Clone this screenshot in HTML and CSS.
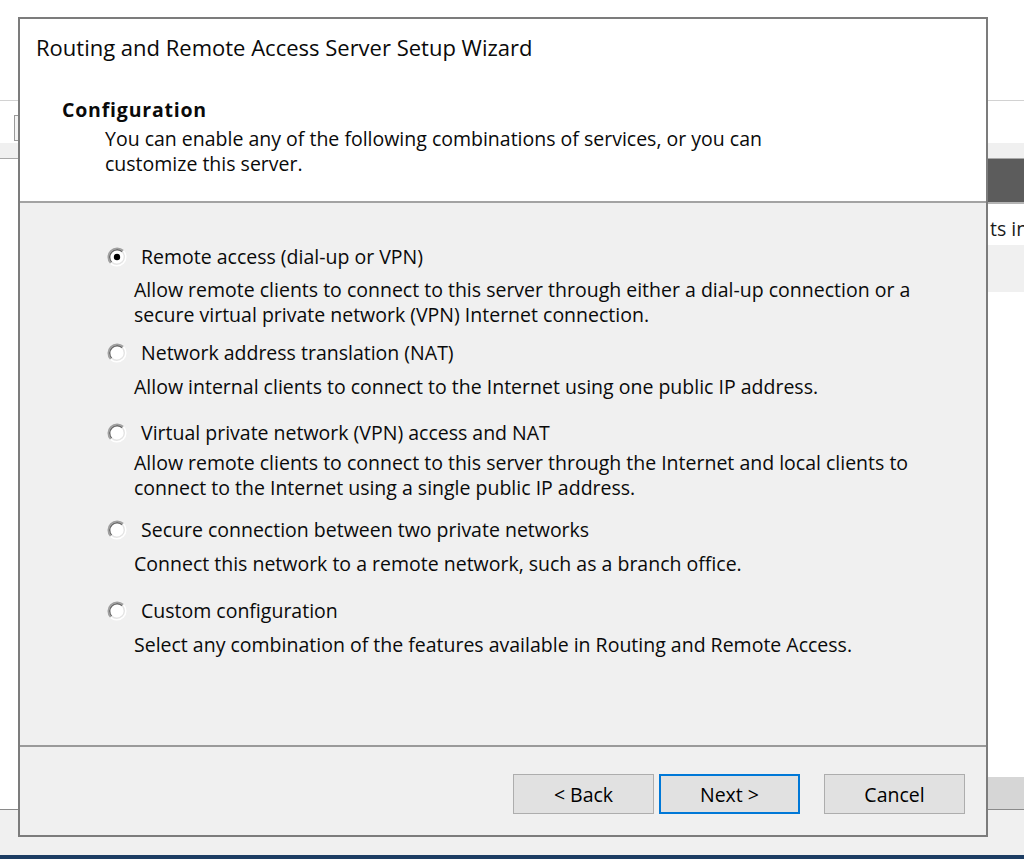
FILE: index.html
```html
<!DOCTYPE html>
<html>
<head>
<meta charset="utf-8">
<link rel="stylesheet" href="styles.css">
</head>
<body>
<div class="screen">
  <div class="app">
    <div class="app-top"></div>
    <div class="app-toolbar"><span class="tool-btn"></span></div>
    <div class="app-strip"></div>
    <div class="app-panes">
      <div class="pane-left"></div>
      <div class="pane-right">
        <div class="pane-head"></div>
        <div class="pane-row"><span class="pane-text">ts in</span></div>
        <div class="pane-band"></div>
        <div class="pane-fill"></div>
        <div class="pane-scroll"></div>
      </div>
    </div>
    <div class="app-status"></div>
    <div class="taskbar"></div>
  </div>

  <div class="dialog">
    <div class="dlg-header">
      <div class="dlg-title">Routing and Remote Access Server Setup Wizard</div>
      <div class="dlg-heading">Configuration</div>
      <div class="dlg-sub">You can enable any of the following combinations of services, or you can<br>customize this server.</div>
    </div>
    <div class="dlg-body">
      <div class="opt opt-1">
        <div class="opt-row">
          <svg class="radio" viewBox="0 0 20 20" width="20" height="20"><circle cx="10" cy="10" r="9" fill="#fff"/><path d="M3.64 16.36 A9 9 0 0 1 16.36 3.64" fill="none" stroke="#a0a0a0" stroke-width="1.5"/><path d="M4.7 15.3 A7.5 7.5 0 0 1 15.3 4.7" fill="none" stroke="#6a6a6a" stroke-width="1.4"/><path d="M16.36 3.64 A9 9 0 0 1 3.64 16.36" fill="none" stroke="#ffffff" stroke-width="1.5"/><path d="M15.3 4.7 A7.5 7.5 0 0 1 4.7 15.3" fill="none" stroke="#e4e4e4" stroke-width="1.4"/><circle cx="10" cy="10" r="3.2" fill="#000"/></svg>
          <span class="opt-label">Remote access (dial-up or VPN)</span>
        </div>
        <div class="opt-desc">Allow remote clients to connect to this server through either a dial-up connection or a<br>secure virtual private network (VPN) Internet connection.</div>
      </div>
      <div class="opt opt-2">
        <div class="opt-row">
          <svg class="radio" viewBox="0 0 20 20" width="20" height="20"><circle cx="10" cy="10" r="9" fill="#fff"/><path d="M3.64 16.36 A9 9 0 0 1 16.36 3.64" fill="none" stroke="#a0a0a0" stroke-width="1.5"/><path d="M4.7 15.3 A7.5 7.5 0 0 1 15.3 4.7" fill="none" stroke="#6a6a6a" stroke-width="1.4"/><path d="M16.36 3.64 A9 9 0 0 1 3.64 16.36" fill="none" stroke="#ffffff" stroke-width="1.5"/><path d="M15.3 4.7 A7.5 7.5 0 0 1 4.7 15.3" fill="none" stroke="#e4e4e4" stroke-width="1.4"/></svg>
          <span class="opt-label">Network address translation (NAT)</span>
        </div>
        <div class="opt-desc">Allow internal clients to connect to the Internet using one public IP address.</div>
      </div>
      <div class="opt opt-3">
        <div class="opt-row">
          <svg class="radio" viewBox="0 0 20 20" width="20" height="20"><circle cx="10" cy="10" r="9" fill="#fff"/><path d="M3.64 16.36 A9 9 0 0 1 16.36 3.64" fill="none" stroke="#a0a0a0" stroke-width="1.5"/><path d="M4.7 15.3 A7.5 7.5 0 0 1 15.3 4.7" fill="none" stroke="#6a6a6a" stroke-width="1.4"/><path d="M16.36 3.64 A9 9 0 0 1 3.64 16.36" fill="none" stroke="#ffffff" stroke-width="1.5"/><path d="M15.3 4.7 A7.5 7.5 0 0 1 4.7 15.3" fill="none" stroke="#e4e4e4" stroke-width="1.4"/></svg>
          <span class="opt-label">Virtual private network (VPN) access and NAT</span>
        </div>
        <div class="opt-desc">Allow remote clients to connect to this server through the Internet and local clients to<br>connect to the Internet using a single public IP address.</div>
      </div>
      <div class="opt opt-4">
        <div class="opt-row">
          <svg class="radio" viewBox="0 0 20 20" width="20" height="20"><circle cx="10" cy="10" r="9" fill="#fff"/><path d="M3.64 16.36 A9 9 0 0 1 16.36 3.64" fill="none" stroke="#a0a0a0" stroke-width="1.5"/><path d="M4.7 15.3 A7.5 7.5 0 0 1 15.3 4.7" fill="none" stroke="#6a6a6a" stroke-width="1.4"/><path d="M16.36 3.64 A9 9 0 0 1 3.64 16.36" fill="none" stroke="#ffffff" stroke-width="1.5"/><path d="M15.3 4.7 A7.5 7.5 0 0 1 4.7 15.3" fill="none" stroke="#e4e4e4" stroke-width="1.4"/></svg>
          <span class="opt-label">Secure connection between two private networks</span>
        </div>
        <div class="opt-desc">Connect this network to a remote network, such as a branch office.</div>
      </div>
      <div class="opt opt-5">
        <div class="opt-row">
          <svg class="radio" viewBox="0 0 20 20" width="20" height="20"><circle cx="10" cy="10" r="9" fill="#fff"/><path d="M3.64 16.36 A9 9 0 0 1 16.36 3.64" fill="none" stroke="#a0a0a0" stroke-width="1.5"/><path d="M4.7 15.3 A7.5 7.5 0 0 1 15.3 4.7" fill="none" stroke="#6a6a6a" stroke-width="1.4"/><path d="M16.36 3.64 A9 9 0 0 1 3.64 16.36" fill="none" stroke="#ffffff" stroke-width="1.5"/><path d="M15.3 4.7 A7.5 7.5 0 0 1 4.7 15.3" fill="none" stroke="#e4e4e4" stroke-width="1.4"/></svg>
          <span class="opt-label">Custom configuration</span>
        </div>
        <div class="opt-desc">Select any combination of the features available in Routing and Remote Access.</div>
      </div>
    </div>
    <div class="dlg-footer">
      <button class="btn">&lt; Back</button>
      <button class="btn btn-default">Next &gt;</button>
      <button class="btn btn-cancel">Cancel</button>
    </div>
  </div>
</div>
</body>
</html>
```

FILE: styles.css
```css
html, body {
  margin: 0;
  padding: 0;
}
body {
  width: 1024px;
  height: 859px;
  overflow: hidden;
  background: #ffffff;
  font-family: "Open Sans", "Noto Sans", "DejaVu Sans", sans-serif;
  color: #000;
}
.screen {
  position: relative;
  width: 1024px;
  height: 859px;
  overflow: hidden;
}

/* background application */
.app {
  display: flex;
  flex-direction: column;
  width: 1024px;
  height: 859px;
}
.app-top {
  height: 100px;
  border-bottom: 1px solid #d2d2d2;
  background: #fff;
}
.app-toolbar {
  height: 42px;
  background: #fff;
  display: flex;
  align-items: flex-start;
}
.tool-btn {
  margin: 14px 0 0 14px;
  width: 22px;
  height: 24px;
  border: 1px solid #9a9a9a;
  background: #f4f4f4;
}
.app-strip {
  height: 15px;
  background: #f0f0f0;
  border-bottom: 1px solid #a8a8a8;
}
.app-panes {
  flex: 1;
  display: flex;
}
.pane-left {
  width: 600px;
  background: #fff;
}
.pane-right {
  flex: 1;
  display: flex;
  flex-direction: column;
  overflow: hidden;
}
.pane-head {
  height: 43px;
  background: #5c5c5c;
  border-bottom: 2px solid #b4b4b4;
}
.pane-row {
  height: 41px;
  display: flex;
  align-items: flex-end;
  padding-left: 390px;
  white-space: nowrap;
}
.pane-text {
  font-size: 19.5px;
  line-height: 25px;
  padding-bottom: 4px;
  color: #1a1a1a;
}
.pane-band {
  height: 47px;
  background: #f0f0f0;
}
.pane-fill {
  flex: 1;
  background: #fff;
}
.pane-scroll {
  height: 32px;
  background: #d6d6d6;
}
.app-status {
  height: 45px;
  border-top: 1px solid #8a8a8a;
  background: #f0f0f0;
}
.taskbar {
  height: 4px;
  background: #1c3d63;
}

/* wizard dialog */
.dialog {
  position: absolute;
  left: 18px;
  top: 17px;
  width: 970px;
  height: 820px;
  box-sizing: border-box;
  border: 2px solid #7c7c7c;
  background: #f0f0f0;
  display: flex;
  flex-direction: column;
  font-size: 19.5px;
  line-height: 25px;
  color: #0a0a0a;
}
.dlg-header {
  flex: none;
  height: 184px;
  box-sizing: border-box;
  background: #fff;
  border-bottom: 2px solid #a3a3a3;
  padding: 16px 0 0 16px;
}
.dlg-title {
  font-size: 22px;
}
.dlg-heading {
  margin: 37px 0 0 26px;
  font-weight: 700;
  letter-spacing: 0.8px;
}
.dlg-sub {
  margin: 4px 0 0 69px;
}
.dlg-body {
  flex: none;
  height: 544px;
  box-sizing: border-box;
  border-bottom: 2px solid #9a9a9a;
  padding: 41px 0 0 87px;
}
.opt-row {
  display: flex;
  align-items: center;
  height: 25px;
}
.radio {
  flex: none;
  width: 20px;
  height: 20px;
  margin-right: 14px;
}
.opt-desc {
  margin: 8px 0 0 27px;
}
.opt-2 { margin-top: 13px; }
.opt-2 .opt-desc { margin-top: 9px; }
.opt-3 { margin-top: 21px; }
.opt-3 .opt-desc { margin-top: 5px; }
.opt-4 { margin-top: 17px; }
.opt-4 .opt-desc { margin-top: 9px; }
.opt-5 { margin-top: 22px; }
.opt-5 .opt-desc { margin-top: 9px; }

.dlg-footer {
  flex: 1;
  display: flex;
  justify-content: flex-end;
  align-items: flex-start;
  padding: 27px 21px 0 0;
}
.btn {
  width: 141px;
  height: 40px;
  box-sizing: border-box;
  border: 1px solid #adadad;
  background: #e1e1e1;
  font-family: inherit;
  font-size: 19.5px;
  color: #000;
  padding: 0;
  margin: 0;
}
.btn-default {
  margin-left: 5px;
  border: 2px solid #0078d7;
}
.btn-cancel {
  margin-left: 24px;
}
```
